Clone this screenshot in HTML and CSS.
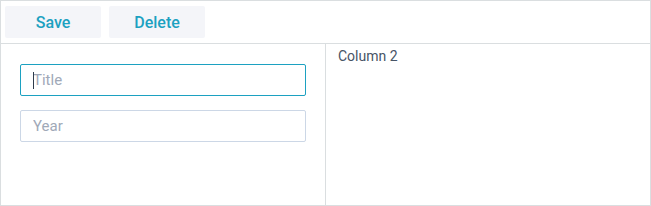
FILE: index.html
```html
<!DOCTYPE html>
<html>
<head>
<meta charset="utf-8">
<link rel="stylesheet" href="styles.css">
</head>
<body>
<div class="app">
  <div class="toolbar">
    <button class="btn">Save</button>
    <button class="btn">Delete</button>
  </div>
  <div class="cols">
    <div class="col col-left">
      <div class="field">
        <input class="input input-focus" type="text" placeholder="Title">
        <span class="caret"></span>
      </div>
      <div class="field">
        <input class="input" type="text" placeholder="Year">
      </div>
    </div>
    <div class="col col-right">Column 2</div>
  </div>
</div>
</body>
</html>
```
FILE: styles.css
```css
* { box-sizing: border-box; }
html, body { margin: 0; padding: 0; background: #ffffff; }
body { font-family: Roboto, "Liberation Sans", sans-serif; }
.app {
  width: 651px;
  height: 206px;
  border: 1px solid #dadee0;
  display: flex;
  flex-direction: column;
}
.toolbar {
  height: 43px;
  flex: none;
  border-bottom: 1px solid #dadee0;
  padding: 5px 4px;
  display: flex;
  gap: 8px;
}
.btn {
  width: 96px;
  height: 32px;
  border: none;
  border-radius: 2px;
  background: #f4f5f9;
  color: #1ca1c1;
  font-family: Roboto, "Liberation Sans", sans-serif;
  font-weight: 500;
  font-size: 16px;
  padding: 0;
  display: flex;
  align-items: center;
  justify-content: center;
}
.cols {
  flex: 1;
  display: flex;
}
.col-left {
  width: 325px;
  border-right: 1px solid #dadee0;
  padding: 20px 18px 0 19px;
  display: flex;
  flex-direction: column;
  gap: 14px;
}
.field { position: relative; height: 32px; }
.input {
  width: 286px;
  height: 32px;
  border: 1px solid #ccd7e6;
  border-radius: 2px;
  padding: 0 12px;
  font-family: Roboto, "Liberation Sans", sans-serif;
  font-size: 15px;
  color: #475466;
  outline: none;
  background: #ffffff;
}
.input::placeholder { color: #a0a9b8; }
.input-focus { border-color: #1ca1c1; }
.caret {
  position: absolute;
  left: 13px;
  top: 8px;
  width: 1px;
  height: 17px;
  background: #2e3b4b;
}
.col-right {
  flex: 1;
  padding: 2px 12px;
  font-size: 14px;
  line-height: 20px;
  color: #475466;
}
```
